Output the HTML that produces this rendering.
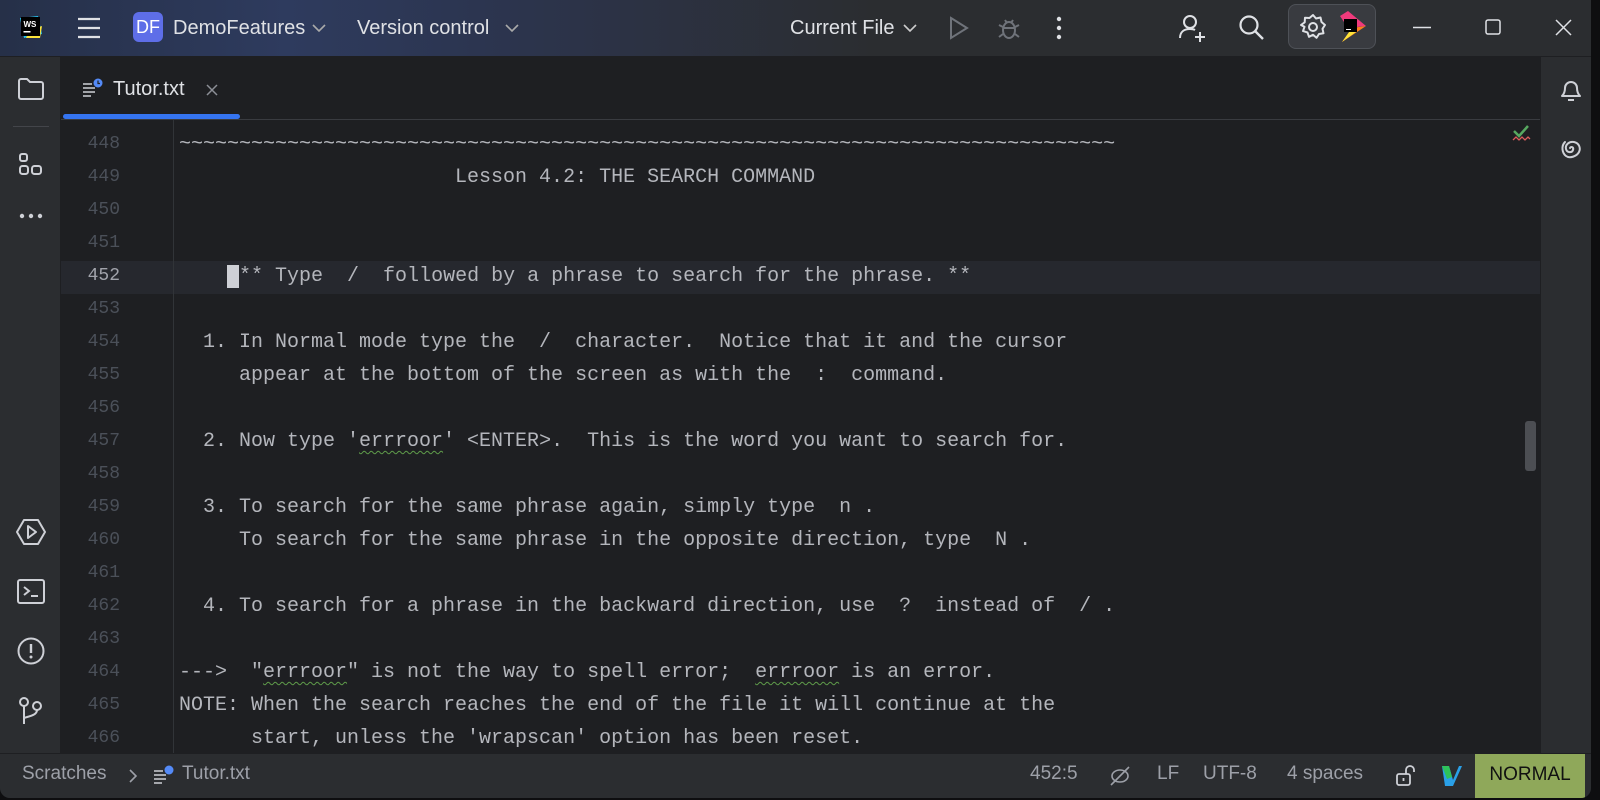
<!DOCTYPE html>
<html><head><meta charset="utf-8"><style>
*{box-sizing:border-box;margin:0;padding:0}
body{width:1600px;height:800px;background:#0e0e10;overflow:hidden;font-family:"Liberation Sans",sans-serif;color:#dfe1e5}
#win{position:absolute;left:0;top:0;width:1591px;height:798px;background:#1e1f22;border-radius:0 0 10px 10px;overflow:hidden}
#title{position:absolute;left:0;top:0;width:100%;height:57px;background:linear-gradient(90deg,#263048 0%,#2e3b5e 18%,#2c3550 30%,#2b2d30 55%);border-bottom:1px solid #1e1f22}
.t{position:absolute;font-size:20px;color:#dfe1e5;top:17px}
#left{position:absolute;left:0;top:57px;width:61px;height:696px;background:#2b2d30;border-right:1px solid #1e1f22}
#right{position:absolute;left:1540px;top:57px;width:51px;height:696px;background:#2b2d30;border-left:1px solid #1e1f22}
#tabs{position:absolute;left:61px;top:57px;width:1479px;height:63px;border-bottom:1px solid #393b40}
#gutter{position:absolute;left:173px;top:120px;width:1px;height:633px;background:#313438}
.ln{position:absolute;left:61px;width:59px;text-align:right;font-family:"Liberation Mono",monospace;font-size:18px;color:#4b5059}
.code{position:absolute;left:179px;font-family:"Liberation Mono",monospace;font-size:20px;color:#b4b6bc;white-space:pre;line-height:24px}
.sq{text-decoration:underline wavy #5f9c4a;text-decoration-thickness:1px;text-underline-offset:4px}
#status{position:absolute;left:0;top:753px;width:100%;height:45px;background:#2b2d30;border-top:1px solid #1e1f22}
.s{position:absolute;top:9px;font-size:19px;color:#9da0a8}
svg{position:absolute}
</style></head><body><div id="win">
<div id="title">
 <svg style="left:18px;top:14px" width="26" height="26" viewBox="0 0 26 26"><path d="M2 4 L20 2 L24 20 L6 24Z" fill="#23c5f0"/><path d="M12 16 L24 12 L22 24 L8 24Z" fill="#fce43a"/><rect x="3" y="3" width="19" height="19" fill="#000"/><text x="5.5" y="13" font-size="8" font-weight="bold" fill="#fff" font-family="Liberation Sans">WS</text><rect x="5.5" y="17" width="7" height="1.5" fill="#fff"/></svg>
 <svg style="left:76px;top:16px" width="26" height="24"><path d="M2 3h22M2 12h22M2 21h22" stroke="#dfe1e5" stroke-width="2.2"/></svg>
 <div style="position:absolute;left:133px;top:12px;width:30px;height:30px;border-radius:6px;background:#5e6ee8;color:#fff;font-size:18px;text-align:center;line-height:30px">DF</div>
 <div class="t" style="left:173px">DemoFeatures</div>
 <svg style="left:312px;top:23px" width="14" height="10"><path d="M1 2l6 6 6-6" fill="none" stroke="#aaa" stroke-width="1.6"/></svg>
 <div class="t" style="left:357px">Version control</div>
 <svg style="left:505px;top:23px" width="14" height="10"><path d="M1 2l6 6 6-6" fill="none" stroke="#aaa" stroke-width="1.6"/></svg>
 <div class="t" style="left:790px">Current File</div>
 <svg style="left:903px;top:23px" width="14" height="10"><path d="M1 2l6 6 6-6" fill="none" stroke="#ccc" stroke-width="1.6"/></svg>
 <svg style="left:948px;top:16px" width="22" height="24"><path d="M3 2l16 10-16 10z" fill="none" stroke="#6f737a" stroke-width="2"/></svg>
 <svg style="left:997px;top:15px" width="24" height="26"><ellipse cx="12" cy="15" rx="6" ry="8" fill="none" stroke="#6f737a" stroke-width="2"/><path d="M6 13h12M2 10l4 2M22 10l-4 2M2 22l4-3M22 22l-4-3M8 5l2 3M16 5l-2 3" stroke="#6f737a" stroke-width="2"/></svg>
 <svg style="left:1055px;top:15px" width="8" height="26"><circle cx="4" cy="4" r="2.2" fill="#dfe1e5"/><circle cx="4" cy="13" r="2.2" fill="#dfe1e5"/><circle cx="4" cy="22" r="2.2" fill="#dfe1e5"/></svg>
 <svg style="left:1178px;top:13px" width="30" height="30"><circle cx="12" cy="9" r="6" fill="none" stroke="#dfe1e5" stroke-width="2"/><path d="M2 25c0-6 4-9 10-9 2 0 4 .4 5 1M17 24h10M22 19v10" fill="none" stroke="#dfe1e5" stroke-width="2"/></svg>
 <svg style="left:1238px;top:14px" width="28" height="28"><circle cx="11" cy="11" r="8.5" fill="none" stroke="#dfe1e5" stroke-width="2.2"/><path d="M17 17l8 8" stroke="#dfe1e5" stroke-width="2.4"/></svg>
 <div style="position:absolute;left:1288px;top:4px;width:88px;height:45px;border-radius:8px;background:#393b40;border:1px solid #4e5157"></div>
 <svg style="left:1299px;top:13px" width="28" height="28" viewBox="0 0 28 28"><path d="M14 2l3 3.5 4.5-1 1 4.5 3.5 3-2.5 3.8 1 4.5-4.5.7-2.5 3.8-3.5-3-4 2-1.5-4.4-4.5-1.3 1.5-4.3L2 12l3.7-2.7.3-4.6 4.5.3z" fill="none" stroke="#dfe1e5" stroke-width="2" stroke-linejoin="round"/><circle cx="14" cy="14" r="4" fill="none" stroke="#dfe1e5" stroke-width="2"/></svg>
 <svg style="left:1336px;top:10px" width="32" height="34" viewBox="0 0 32 34"><path d="M4 6l8-5 18 15-18 2z" fill="#f03a7c"/><path d="M30 16l-14 2-10 14z" fill="#fc801d"/><path d="M6 32l10-14 4 4z" fill="#fde33a"/><rect x="8" y="9" width="13" height="13" fill="#000"/><rect x="10" y="19" width="5" height="1" fill="#fff"/></svg>
 <svg style="left:1413px;top:26px" width="18" height="3"><path d="M0 1.5h18" stroke="#dfe1e5" stroke-width="1.5"/></svg>
 <svg style="left:1485px;top:19px" width="16" height="16"><rect x="1" y="1" width="14" height="14" rx="2" fill="none" stroke="#dfe1e5" stroke-width="1.5"/></svg>
 <svg style="left:1555px;top:19px" width="17" height="17"><path d="M1 1l15 15M16 1L1 16" stroke="#dfe1e5" stroke-width="1.5"/></svg>
</div>
<div id="left">
 <svg style="left:17px;top:20px" width="28" height="24"><path d="M2 4a2 2 0 0 1 2-2h6l3 3h11a2 2 0 0 1 2 2v13a2 2 0 0 1-2 2H4a2 2 0 0 1-2-2z" fill="none" stroke="#ced0d6" stroke-width="2"/></svg>
 <div style="position:absolute;left:13px;top:69px;width:36px;height:1px;background:#43454a"></div>
 <svg style="left:18px;top:95px" width="26" height="26"><rect x="2" y="2" width="7" height="7" rx="2" fill="none" stroke="#ced0d6" stroke-width="2"/><rect x="2" y="14" width="8" height="8" rx="2.5" fill="none" stroke="#ced0d6" stroke-width="2"/><rect x="14" y="14" width="9" height="8" rx="2.5" fill="none" stroke="#ced0d6" stroke-width="2"/></svg>
 <svg style="left:18px;top:155px" width="26" height="8"><circle cx="4" cy="4" r="2.2" fill="#ced0d6"/><circle cx="13" cy="4" r="2.2" fill="#ced0d6"/><circle cx="22" cy="4" r="2.2" fill="#ced0d6"/></svg>
 <svg style="left:16px;top:461px" width="30" height="28"><path d="M8 2h14l7 12-7 12H8L1 14z" fill="none" stroke="#ced0d6" stroke-width="2" stroke-linejoin="round"/><path d="M12 8l8 6-8 6z" fill="none" stroke="#ced0d6" stroke-width="2" stroke-linejoin="round"/></svg>
 <svg style="left:17px;top:522px" width="28" height="26"><rect x="1" y="1" width="26" height="23" rx="2" fill="none" stroke="#ced0d6" stroke-width="2"/><path d="M7 8l5 4-5 4M14 17h7" fill="none" stroke="#ced0d6" stroke-width="2"/></svg>
 <svg style="left:16px;top:579px" width="30" height="30"><circle cx="15" cy="15" r="12.5" fill="none" stroke="#ced0d6" stroke-width="2"/><path d="M15 8v9" stroke="#ced0d6" stroke-width="2.4"/><circle cx="15" cy="21" r="1.5" fill="#ced0d6"/></svg>
 <svg style="left:18px;top:639px" width="26" height="30"><circle cx="6" cy="6" r="4" fill="none" stroke="#ced0d6" stroke-width="2"/><circle cx="19" cy="10" r="4" fill="none" stroke="#ced0d6" stroke-width="2"/><path d="M6 10v18M19 14c0 5-7 6-13 8" fill="none" stroke="#ced0d6" stroke-width="2"/></svg>
</div>
<div id="right">
 <svg style="left:17px;top:18px" width="26" height="30"><path d="M4 21c2-2 3-4 3-8a6 6 0 0 1 12 0c0 4 1 6 3 8z" fill="none" stroke="#ced0d6" stroke-width="2" stroke-linejoin="round"/><path d="M10 25h6" stroke="#ced0d6" stroke-width="2"/></svg>
 <svg style="left:17px;top:78px" width="26" height="26"><path d="M12 13c1-2 4-1 3 2s-6 3-7-1 3-8 8-7 7 6 5 10-9 7-13 4-5-10-1-14" fill="none" stroke="#ced0d6" stroke-width="2" stroke-linecap="round"/></svg>
</div>
<div id="tabs">
 <svg style="left:21px;top:21px" width="22" height="20"><path d="M1 6h9M1 10h12M1 14h12M1 18h8" stroke="#ced0d6" stroke-width="1.6"/><circle cx="16" cy="5" r="4.5" fill="#548af7"/><path d="M16 2.5v3h2" stroke="#1e1f22" stroke-width="1.2" fill="none"/></svg>
 <div style="position:absolute;left:52px;top:21px;font-size:20px;color:#dfe1e5">Tutor.txt</div>
 <svg style="left:145px;top:27px" width="12" height="12"><path d="M1 1l10 10M11 1L1 11" stroke="#8c8f96" stroke-width="1.5"/></svg>
 <div style="position:absolute;left:2px;top:57px;width:177px;height:5px;border-radius:3px;background:#3574f0"></div>
</div>
<div style="position:absolute;left:61px;top:261px;width:1479px;height:33px;background:#26282e"></div>
<div id="gutter"></div>
<svg style="left:1512px;top:124px" width="20" height="18"><path d="M2 7l5 5 9-10" fill="none" stroke="#57a860" stroke-width="2.5"/><path d="M1 16l3-3 3 3 3-3 3 3 3-3 2 2" fill="none" stroke="#db5c5c" stroke-width="1.3"/></svg>
<div style="position:absolute;left:1525px;top:421px;width:11px;height:50px;border-radius:3px;background:#4c4e53"></div>

<div class="ln" style="top:134px">448</div><div class="ln" style="top:167px">449</div><div class="ln" style="top:200px">450</div><div class="ln" style="top:233px">451</div><div class="ln" style="top:266px;color:#a1a3ab">452</div><div class="ln" style="top:299px">453</div><div class="ln" style="top:332px">454</div><div class="ln" style="top:365px">455</div><div class="ln" style="top:398px">456</div><div class="ln" style="top:431px">457</div><div class="ln" style="top:464px">458</div><div class="ln" style="top:497px">459</div><div class="ln" style="top:530px">460</div><div class="ln" style="top:563px">461</div><div class="ln" style="top:596px">462</div><div class="ln" style="top:629px">463</div><div class="ln" style="top:662px">464</div><div class="ln" style="top:695px">465</div><div class="ln" style="top:728px">466</div>

<div class="code" style="top:133px">~~~~~~~~~~~~~~~~~~~~~~~~~~~~~~~~~~~~~~~~~~~~~~~~~~~~~~~~~~~~~~~~~~~~~~~~~~~~~~</div>
<div class="code" style="top:166px">                       Lesson 4.2: THE SEARCH COMMAND</div>
<div class="code" style="top:265px">    <span style="background:#ced0d6;color:#1e1f22"> </span>** Type  /  followed by a phrase to search for the phrase. **</div>
<div class="code" style="top:331px">  1. In Normal mode type the  /  character.  Notice that it and the cursor</div>
<div class="code" style="top:364px">     appear at the bottom of the screen as with the  :  command.</div>
<div class="code" style="top:430px">  2. Now type '<span class="sq">errroor</span>' &lt;ENTER&gt;.  This is the word you want to search for.</div>
<div class="code" style="top:496px">  3. To search for the same phrase again, simply type  n .</div>
<div class="code" style="top:529px">     To search for the same phrase in the opposite direction, type  N .</div>
<div class="code" style="top:595px">  4. To search for a phrase in the backward direction, use  ?  instead of  / .</div>
<div class="code" style="top:661px">---&gt;  "<span class="sq">errroor</span>" is not the way to spell error;  <span class="sq">errroor</span> is an error.</div>
<div class="code" style="top:694px">NOTE: When the search reaches the end of the file it will continue at the</div>
<div class="code" style="top:727px">      start, unless the 'wrapscan' option has been reset.</div>

<div id="status">
 <div class="s" style="left:22px">Scratches</div>
 <svg style="left:128px;top:15px" width="10" height="14"><path d="M2 1l6 6-6 6" fill="none" stroke="#9da0a8" stroke-width="1.6"/></svg>
 <svg style="left:153px;top:11px" width="22" height="20"><path d="M1 6h9M1 10h12M1 14h12M1 18h8" stroke="#ced0d6" stroke-width="1.6"/><circle cx="16" cy="5" r="4.5" fill="#548af7"/></svg>
 <div class="s" style="left:182px">Tutor.txt</div>
 <div class="s" style="left:1030px">452:5</div>
 <svg style="left:1108px;top:11px" width="24" height="22"><ellipse cx="12" cy="11" rx="8" ry="6" fill="none" stroke="#9da0a8" stroke-width="1.6"/><path d="M3 20L21 2" stroke="#9da0a8" stroke-width="1.6"/></svg>
 <div class="s" style="left:1157px">LF</div>
 <div class="s" style="left:1203px">UTF-8</div>
 <div class="s" style="left:1287px">4 spaces</div>
 <svg style="left:1395px;top:10px" width="22" height="24"><rect x="2" y="10" width="13" height="11" rx="2" fill="none" stroke="#ced0d6" stroke-width="1.8"/><path d="M11 10V6a4 4 0 0 1 8 0v2" fill="none" stroke="#ced0d6" stroke-width="1.8"/><path d="M8.5 14v3" stroke="#ced0d6" stroke-width="1.8"/></svg>
 <svg style="left:1441px;top:10px" width="22" height="24"><path d="M1 2h7l4 14 6-14h3l-9 20H4z" fill="#2aa0e8"/><path d="M1 2h7l3 11-5 2z" fill="#2ec35a"/></svg>
 <div style="position:absolute;left:1475px;top:0;width:110px;height:44px;background:#8fa85a;color:#111;font-size:19px;text-align:center;line-height:42px">NORMAL</div>
</div>
</div></body></html>
